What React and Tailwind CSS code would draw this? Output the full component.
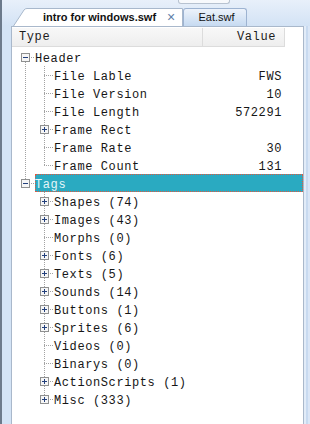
import React from "react";

const L = "#a3a3a3";

function Gutter({ v, h, box }) {
  return (
    <svg width="19" height="18" className="block shrink-0">
      {v === "full" && <line x1="9.5" y1="0" x2="9.5" y2="18" stroke={L} strokeDasharray="1 1" />}
      {v === "top" && <line x1="9.5" y1="0" x2="9.5" y2="10" stroke={L} strokeDasharray="1 1" />}
      {v === "bottom" && <line x1="9.5" y1="10" x2="9.5" y2="18" stroke={L} strokeDasharray="1 1" />}
      {h && <line x1="9" y1="9.5" x2="19" y2="9.5" stroke={L} strokeDasharray="1 1" />}
      {box && (
        <g>
          <rect x="5.5" y="5.5" width="8" height="8" fill="#f6f6f6" stroke="#8f9090" />
          <line x1="7" y1="9.5" x2="12" y2="9.5" stroke="#23407c" />
          {box === "plus" && <line x1="9.5" y1="7" x2="9.5" y2="12" stroke="#23407c" />}
        </g>
      )}
    </svg>
  );
}

const P = { v: "full" };
const tee = (box) => ({ v: "full", h: true, box });
const elbow = (box) => ({ v: "top", h: true, box });

const rows = [
  { name: "Header", l0: { v: "bottom", h: true, box: "minus" } },
  { name: "File Lable", value: "FWS", l0: P, l1: tee() },
  { name: "File Version", value: "10", l0: P, l1: tee() },
  { name: "File Length", value: "572291", l0: P, l1: tee() },
  { name: "Frame Rect", l0: P, l1: tee("plus") },
  { name: "Frame Rate", value: "30", l0: P, l1: tee() },
  { name: "Frame Count", value: "131", l0: P, l1: elbow() },
  { name: "Tags", sel: true, l0: { v: "top", h: true, box: "minus" } },
  { name: "Shapes (74)", l0: {}, l1: tee("plus") },
  { name: "Images (43)", l0: {}, l1: tee("plus") },
  { name: "Morphs (0)", l0: {}, l1: tee() },
  { name: "Fonts (6)", l0: {}, l1: tee("plus") },
  { name: "Texts (5)", l0: {}, l1: tee("plus") },
  { name: "Sounds (14)", l0: {}, l1: tee("plus") },
  { name: "Buttons (1)", l0: {}, l1: tee("plus") },
  { name: "Sprites (6)", l0: {}, l1: tee("plus") },
  { name: "Videos (0)", l0: {}, l1: tee() },
  { name: "Binarys (0)", l0: {}, l1: tee() },
  { name: "ActionScripts (1)", l0: {}, l1: tee("plus") },
  { name: "Misc (333)", l0: {}, l1: elbow("plus") },
];

export default function App() {
  return (
    <div className="w-[310px] h-[424px] overflow-hidden flex bg-[#d3e3f5] font-['Liberation_Sans',Arial,sans-serif]">
      <div className="w-[2px] shrink-0 bg-[#6c7a8b]" />
      <div className="flex-1 flex flex-col min-w-0">
        {/* tab strip */}
        <div className="relative h-[26px] shrink-0 flex items-end pl-[11px] bg-gradient-to-b from-[#e8f0fa] to-[#d3e3f5]">
          <div className="absolute left-[176px] top-0 w-[52px] h-[4px] bg-[#f7f9fc] border border-t-0 border-[#b7c2d0] rounded-b-[3px]" />
          <div className="relative w-[170px] h-[18px] shrink-0">
            <svg width="170" height="18" className="absolute inset-0 block">
              <path d="M0.5 18 L11 2 Q12 0.5 14 0.5 H169.5 V18" fill="#ffffff" stroke="#a8b8cc" />
            </svg>
            <div className="relative h-full flex items-center pl-[30px]">
              <span className="text-[11px] font-bold text-[#111] leading-none">intro for windows.swf</span>
              <span className="ml-[11px] text-[14px] leading-none text-[#5f7ea8]">×</span>
            </div>
          </div>
          <div className="w-[64px] h-[18px] shrink-0 flex items-center justify-center pl-[3px] rounded-t-[3px] border border-b-0 border-[#9db3d1] bg-gradient-to-b from-[#edf3fb] to-[#c6daf1] text-[11px] text-[#111] leading-none">
            Eat.swf
          </div>
        </div>
        {/* panel area */}
        <div className="flex-1 flex pl-[9px] min-h-0">
          <div className="flex-1 flex flex-col bg-white border-l border-r border-t border-[#a9b8cb] min-w-0 font-['Liberation_Mono','Courier_New',monospace] text-[12px] tracking-[0.6px]">
            <div className="mt-[1px] h-[19px] flex text-[#1c1c1c]">
              <div className="w-[191px] pl-[7px] flex items-center bg-gradient-to-b from-[#f8f8f8] to-[#eeeeee] border-r border-b border-[#dcdcdc]">
                Type
              </div>
              <div className="w-[82px] pr-[8px] flex items-center justify-end bg-gradient-to-b from-[#f8f8f8] to-[#eeeeee] border-r border-b border-[#dcdcdc]">
                Value
              </div>
            </div>
            <div className="mt-[1px] pl-[4px] flex flex-col">
              {rows.map((r) => (
                <div key={r.name} className="flex h-[18px]">
                  <Gutter {...r.l0} />
                  {r.l1 && <Gutter {...r.l1} />}
                  <div
                    className={
                      r.sel
                        ? "flex-1 flex min-w-0 bg-[#2aaac1] border border-dotted border-[#e2583e] text-[#e4f6f9]"
                        : "flex-1 flex min-w-0 border border-transparent text-[#161616]"
                    }
                  >
                    <div className="flex-1 whitespace-nowrap pt-[3px] leading-[14px] -ml-[1px]">{r.name}</div>
                    <div className="w-[100px] pr-[20px] text-right whitespace-nowrap pt-[3px] leading-[14px]">
                      {r.value || ""}
                    </div>
                  </div>
                </div>
              ))}
            </div>
          </div>
          <div className="w-[6px] shrink-0 flex">
            <div className="w-[2px] bg-[#e2ecf8]" />
            <div className="w-[2px] bg-[#c8daf0]" />
            <div className="w-[2px] bg-[#dae6f6]" />
          </div>
        </div>
      </div>
    </div>
  );
}
